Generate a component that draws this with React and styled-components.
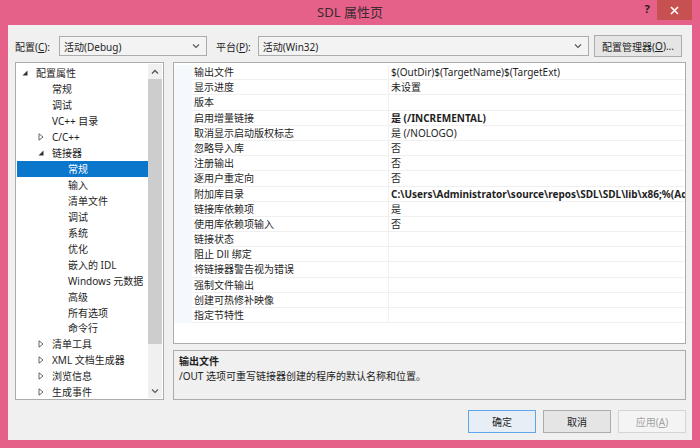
import React from "react";
import styled, { createGlobalStyle } from "styled-components";

const Global = createGlobalStyle`
  html, body { margin: 0; padding: 0; background: #e5618a; }
  * { box-sizing: border-box; }
`;

const FONT = `"Noto Sans", "Noto Sans CJK SC", sans-serif`;

const Window = styled.div`
  width: 700px;
  height: 448px;
  background: #e5618a;
  display: flex;
  flex-direction: column;
  font-family: ${FONT};
  font-size: 10px;
  color: #1e1e1e;
  overflow: hidden;
`;

const TitleBar = styled.div`
  height: 25px;
  display: grid;
  grid-template-columns: 1fr auto 1fr;
  align-items: start;
`;

const Title = styled.div`
  grid-column: 2;
  font-size: 13px;
  line-height: 25px;
  color: #3b2a30;
`;

const Controls = styled.div`
  grid-column: 3;
  justify-self: end;
  display: flex;
  align-items: flex-start;
  margin-right: 8px;
`;

const HelpBtn = styled.div`
  width: 20px;
  height: 20px;
  line-height: 17px;
  text-align: center;
  font-size: 11px;
  font-weight: bold;
  color: #2a1a20;
`;

const CloseBtn = styled.div`
  width: 35px;
  height: 20px;
  background: #c75050;
  color: #fff;
  display: flex;
  align-items: center;
  justify-content: center;
`;

const Client = styled.div`
  flex: 1;
  margin: 0 8px 8px 8px;
  background: #f0f0f0;
  display: flex;
  flex-direction: column;
  padding: 10px 6px 0 7px;
`;

const TopRow = styled.div`
  display: flex;
  align-items: center;
  height: 22px;
`;

const Label = styled.span`
  margin-right: ${(p) => p.$mr || 6}px;
  white-space: nowrap;
`;

const U = styled.span`
  text-decoration: underline;
`;

const Combo = styled.div`
  width: ${(p) => p.$w}px;
  height: 20px;
  border: 1px solid #acacac;
  background: #f3f3f3;
  display: flex;
  align-items: center;
  justify-content: space-between;
  padding: 0 6px 0 4px;
  margin-right: ${(p) => p.$mr || 0}px;
`;

const Chevron = () => (
  <svg width="8" height="6" viewBox="0 0 8 6">
    <path d="M1 1.5 L4 4.5 L7 1.5" fill="none" stroke="#555" strokeWidth="1.1" />
  </svg>
);

const ManagerBtn = styled.div`
  margin-left: auto;
  margin-right: 4px;
  width: 88px;
  height: 22px;
  border: 1px solid #acacac;
  background: #e5e5e5;
  display: flex;
  align-items: center;
  justify-content: center;
`;

const Body = styled.div`
  display: flex;
  margin-top: 5px;
  gap: 9px;
`;

const Tree = styled.div`
  width: 149px;
  height: 338px;
  border: 1px solid #acacac;
  background: #fff;
  display: flex;
  padding: 1px 1px;
`;

const TreeList = styled.div`
  flex: 1;
  padding-top: 1px;
`;

const TreeRow = styled.div`
  height: 15.95px;
  display: flex;
  align-items: center;
  padding-left: ${(p) => 5 + p.$level * 16}px;
  background: ${(p) => (p.$selected ? "#0a76cc" : "transparent")};
  color: ${(p) => (p.$selected ? "#fff" : "#1e1e1e")};
  white-space: nowrap;
`;

const Arrow = styled.span`
  width: 14px;
  height: 10px;
  display: flex;
  align-items: center;
`;

const Expanded = () => (
  <svg width="6" height="6" viewBox="0 0 6 6">
    <path d="M5.5 0.5 L5.5 5.5 L0.5 5.5 Z" fill="#333" />
  </svg>
);

const Collapsed = () => (
  <svg width="6" height="8" viewBox="0 0 6 8">
    <path d="M1 0.8 L5 4 L1 7.2 Z" fill="none" stroke="#555" strokeWidth="0.9" />
  </svg>
);

const VScroll = styled.div`
  width: 14px;
  background: #f0f0f0;
  display: flex;
  flex-direction: column;
  align-items: center;
`;

const ScrollArrow = styled.div`
  height: 15px;
  width: 100%;
  display: flex;
  align-items: center;
  justify-content: center;
`;

const Thumb = styled.div`
  width: 100%;
  height: 265px;
  background: #cdcdcd;
`;

const Spacer = styled.div`
  flex: 1;
`;

const Right = styled.div`
  flex: 1;
  display: flex;
  flex-direction: column;
`;

const Grid = styled.div`
  height: 282px;
  border: 1px solid #acacac;
  background: #fff;
  padding-top: 2px;
`;

const PropRow = styled.div`
  display: grid;
  grid-template-columns: 18px 197px 1fr;
  height: 15.2px;
`;

const Gutter = styled.div`
  background: #f5f8fc;
`;

const Cell = styled.div`
  border-bottom: 1px solid #f0f0f0;
  border-right: ${(p) => (p.$sep ? "1px solid #f0f0f0" : "none")};
  padding-left: 2px;
  line-height: 14px;
  white-space: nowrap;
  overflow: hidden;
  font-weight: ${(p) => (p.$bold ? "bold" : "normal")};
`;

const Desc = styled.div`
  margin-top: 6px;
  height: 50px;
  border: 1px solid #acacac;
  background: #f0f0f0;
  padding: 3px 5px;
  line-height: 15px;
`;

const DescTitle = styled.div`
  font-weight: bold;
`;

const Footer = styled.div`
  display: flex;
  justify-content: flex-end;
  gap: 7px;
  margin-top: 10px;
  padding-right: 0;
`;

const Btn = styled.div`
  width: 68px;
  height: 23px;
  display: flex;
  align-items: center;
  justify-content: center;
  border: 1px solid ${(p) => (p.$focus ? "#5ea6eb" : p.$disabled ? "#d5d5d5" : "#acacac")};
  background: ${(p) => (p.$disabled ? "#f4f4f4" : p.$focus ? "#e8eef5" : "#e5e5e5")};
  color: ${(p) => (p.$disabled ? "#a3a3a3" : "#1e1e1e")};
`;

const treeItems = [
  { t: "配置属性", l: 0, a: "e" },
  { t: "常规", l: 1 },
  { t: "调试", l: 1 },
  { t: "VC++ 目录", l: 1 },
  { t: "C/C++", l: 1, a: "c" },
  { t: "链接器", l: 1, a: "e" },
  { t: "常规", l: 2, sel: true },
  { t: "输入", l: 2 },
  { t: "清单文件", l: 2 },
  { t: "调试", l: 2 },
  { t: "系统", l: 2 },
  { t: "优化", l: 2 },
  { t: "嵌入的 IDL", l: 2 },
  { t: "Windows 元数据", l: 2 },
  { t: "高级", l: 2 },
  { t: "所有选项", l: 2 },
  { t: "命令行", l: 2 },
  { t: "清单工具", l: 1, a: "c" },
  { t: "XML 文档生成器", l: 1, a: "c" },
  { t: "浏览信息", l: 1, a: "c" },
  { t: "生成事件", l: 1, a: "c" },
];

const props = [
  ["输出文件", "$(OutDir)$(TargetName)$(TargetExt)"],
  ["显示进度", "未设置"],
  ["版本", ""],
  ["启用增量链接", "是 (/INCREMENTAL)", true],
  ["取消显示启动版权标志", "是 (/NOLOGO)"],
  ["忽略导入库", "否"],
  ["注册输出", "否"],
  ["逐用户重定向", "否"],
  ["附加库目录", "C:\\Users\\Administrator\\source\\repos\\SDL\\SDL\\lib\\x86;%(AdditionalLibraryDirectories)", true],
  ["链接库依赖项", "是"],
  ["使用库依赖项输入", "否"],
  ["链接状态", ""],
  ["阻止 Dll 绑定", ""],
  ["将链接器警告视为错误", ""],
  ["强制文件输出", ""],
  ["创建可热修补映像", ""],
  ["指定节特性", ""],
];

export default function App() {
  return (
    <Window>
      <Global />
      <TitleBar>
        <Title>SDL 属性页</Title>
        <Controls>
          <HelpBtn>?</HelpBtn>
          <CloseBtn>
            <svg width="9" height="9" viewBox="0 0 9 9">
              <path d="M1 1 L8 8 M8 1 L1 8" stroke="#fff" strokeWidth="1.6" />
            </svg>
          </CloseBtn>
        </Controls>
      </TitleBar>
      <Client>
        <TopRow>
          <Label $mr={9}>
            配置(<U>C</U>):
          </Label>
          <Combo $w={148} $mr={9}>
            <span>活动(Debug)</span>
            <Chevron />
          </Combo>
          <Label $mr={7}>
            平台(<U>P</U>):
          </Label>
          <Combo $w={331}>
            <span>活动(Win32)</span>
            <Chevron />
          </Combo>
          <ManagerBtn>
            配置管理器(<U>O</U>)...
          </ManagerBtn>
        </TopRow>
        <Body>
          <Tree>
            <TreeList>
              {treeItems.map((it, i) => (
                <TreeRow key={i} $level={it.l} $selected={it.sel}>
                  <Arrow>{it.a === "e" ? <Expanded /> : it.a === "c" ? <Collapsed /> : null}</Arrow>
                  {it.t}
                </TreeRow>
              ))}
            </TreeList>
            <VScroll>
              <ScrollArrow>
                <svg width="8" height="6" viewBox="0 0 8 6">
                  <path d="M1 4.5 L4 1.5 L7 4.5" fill="none" stroke="#555" strokeWidth="1.3" />
                </svg>
              </ScrollArrow>
              <Thumb />
              <Spacer />
              <ScrollArrow>
                <Chevron />
              </ScrollArrow>
            </VScroll>
          </Tree>
          <Right>
            <Grid>
              {props.map(([n, v, b], i) => (
                <PropRow key={i}>
                  <Gutter />
                  <Cell $sep>{n}</Cell>
                  <Cell $bold={b}>{v}</Cell>
                </PropRow>
              ))}
            </Grid>
            <Desc>
              <DescTitle>输出文件</DescTitle>
              <div>/OUT 选项可重写链接器创建的程序的默认名称和位置。</div>
            </Desc>
          </Right>
        </Body>
        <Footer>
          <Btn $focus>确定</Btn>
          <Btn>取消</Btn>
          <Btn $disabled>
            应用(<U>A</U>)
          </Btn>
        </Footer>
      </Client>
    </Window>
  );
}
